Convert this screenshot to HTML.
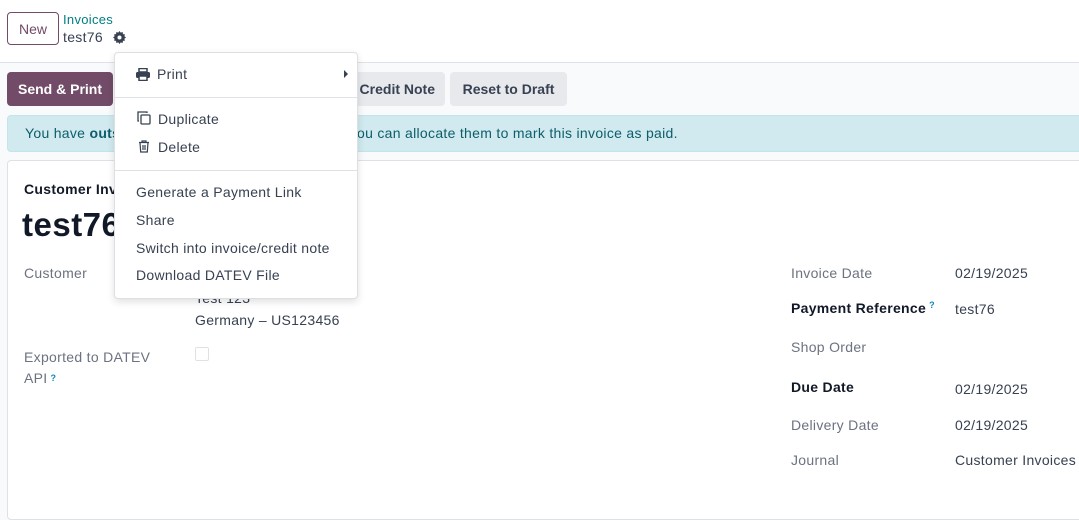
<!DOCTYPE html>
<html><head><meta charset="utf-8"><style>
*{box-sizing:border-box;margin:0;padding:0}
body{width:1079px;height:489px;overflow:hidden;background:#f9fafb;font-family:"Liberation Sans",sans-serif;font-size:14px;color:#374151;position:relative;letter-spacing:0.3px}
.abs{position:absolute}
.top{left:0;top:0;width:1079px;height:63px;background:#fff;border-bottom:1px solid #dee2e6}
.btn{position:absolute;border-radius:4px;font-size:14px;display:flex;align-items:center;justify-content:center;font-weight:bold;letter-spacing:0}
.sheet{left:7px;top:160px;width:1080px;height:360px;background:#fff;border:1px solid #dee2e6;border-radius:4px}
.lbl{position:absolute;color:#6b7280;font-size:14px}
.val{position:absolute;color:#374151;font-size:14px}
.dd{left:114px;top:52px;width:244px;height:247px;background:#fff;border:1px solid #dcdfe3;border-radius:4px;box-shadow:0 3px 8px rgba(0,0,0,.12)}
.it{position:absolute;left:21px;font-size:14px;color:#374151}
.hr{position:absolute;left:0;width:242px;height:1px;background:#dee2e6}
q{quotes:none;color:#0c8ab8;font-size:9px;vertical-align:top;margin-left:3px;font-weight:bold}
</style></head><body>
<div class="abs top"></div>
<div class="btn" style="left:7px;top:12px;width:52px;height:33px;border:1px solid #714b67;color:#714b67;background:#fff;font-weight:normal">New</div>
<div class="abs" style="left:63px;top:12px;color:#017e84;font-size:13px">Invoices</div>
<div class="abs" style="left:63px;top:29px;color:#374151;font-size:14px">test76</div>
<svg class="abs" style="left:113px;top:31px" width="13" height="13" viewBox="0 0 16 16"><path fill="#374151" d="M8 0l1.5 2 2.4-.7.3 2.5 2.5.3-.7 2.4L16 8l-2 1.5.7 2.4-2.5.3-.3 2.5-2.4-.7L8 16l-1.5-2-2.4.7-.3-2.5-2.5-.3.7-2.4L0 8l2-1.5-.7-2.4 2.5-.3.3-2.5 2.4.7z"/><circle cx="8" cy="8" r="2.5" fill="#fff"/></svg>

<div class="btn" style="left:7px;top:72px;width:106px;height:34px;background:#714b67;color:#fff">Send &amp; Print</div>
<div class="btn" style="left:300px;top:72px;width:145px;height:34px;background:#e7e9ed;color:#374151;justify-content:flex-end;padding-right:10px">Credit Note</div>
<div class="btn" style="left:450px;top:72px;width:117px;height:34px;background:#e7e9ed;color:#374151">Reset to Draft</div>

<div class="abs" style="left:7px;top:115px;width:1080px;height:37px;background:#d0eaef;border-radius:4px;border:1px solid #c2e4ea"></div>
<div class="abs" style="left:25px;top:125px;color:#0e5d6a;font-size:14px">You have <b>outs</b></div>
<div class="abs" style="left:357px;top:125px;color:#0e5d6a;font-size:14px">ou can allocate them to mark this invoice as paid.</div>

<div class="abs sheet"></div>
<div class="abs" style="left:24px;top:181px;color:#111827;font-size:14px;font-weight:bold">Customer Inv</div>
<div class="abs" style="left:22px;top:206px;color:#111827;font-size:33px;font-weight:bold;letter-spacing:0.5px">test76</div>
<div class="lbl" style="left:24px;top:265px">Customer</div>
<div class="val" style="left:195px;top:290px">Test 123</div>
<div class="val" style="left:195px;top:312px">Germany – US123456</div>
<div class="lbl" style="left:24px;top:347px;line-height:21px">Exported to DATEV<br>API<q>?</q></div>
<div class="abs" style="left:195px;top:347px;width:14px;height:14px;border:1px solid #dee2e6;border-radius:2px"></div>

<div class="lbl" style="left:791px;top:265px">Invoice Date</div><div class="val" style="left:955px;top:265px">02/19/2025</div>
<div class="lbl" style="left:791px;top:300px;color:#111827;font-weight:bold">Payment Reference<q>?</q></div><div class="val" style="left:955px;top:301px">test76</div>
<div class="lbl" style="left:791px;top:339px">Shop Order</div>
<div class="lbl" style="left:791px;top:379px;color:#111827;font-weight:bold">Due Date</div><div class="val" style="left:955px;top:381px">02/19/2025</div>
<div class="lbl" style="left:791px;top:417px">Delivery Date</div><div class="val" style="left:955px;top:417px">02/19/2025</div>
<div class="lbl" style="left:791px;top:452px">Journal</div><div class="val" style="left:955px;top:452px">Customer Invoices</div>

<div class="abs dd">
<svg class="abs" style="left:21px;top:15px" width="14" height="13" viewBox="0 0 14 13"><rect x="3" y="0.5" width="8" height="3.5" fill="none" stroke="#374151" stroke-width="1.5"/><rect x="0" y="4" width="14" height="6" rx="1.5" fill="#374151"/><rect x="3" y="8" width="8" height="4.5" fill="#fff" stroke="#374151" stroke-width="1.5"/></svg>
<div class="it" style="left:42px;top:13px">Print</div>
<div class="abs" style="left:229px;top:17px;width:0;height:0;border-left:4px solid #374151;border-top:4px solid transparent;border-bottom:4px solid transparent"></div>
<div class="hr" style="top:44px"></div>
<svg class="abs" style="left:22px;top:58px" width="14" height="14" viewBox="0 0 14 14"><rect x="4" y="4" width="9" height="9" rx="1" fill="none" stroke="#374151" stroke-width="1.3"/><path d="M2 10H1V1h9v1" fill="none" stroke="#374151" stroke-width="1.3"/></svg>
<div class="it" style="left:43px;top:58px">Duplicate</div>
<svg class="abs" style="left:23px;top:87px" width="12" height="13" viewBox="0 0 12 13"><path d="M1 2.5h10M4 2.5V1h4v1.5M2 2.5l.7 9.5h6.6l.7-9.5M5 5v5M7 5v5" fill="none" stroke="#374151" stroke-width="1.2"/></svg>
<div class="it" style="left:43px;top:86px">Delete</div>
<div class="hr" style="top:117px"></div>
<div class="it" style="top:131px">Generate a Payment Link</div>
<div class="it" style="top:159px">Share</div>
<div class="it" style="top:187px">Switch into invoice/credit note</div>
<div class="it" style="top:214px">Download DATEV File</div>
</div>
</body></html>
